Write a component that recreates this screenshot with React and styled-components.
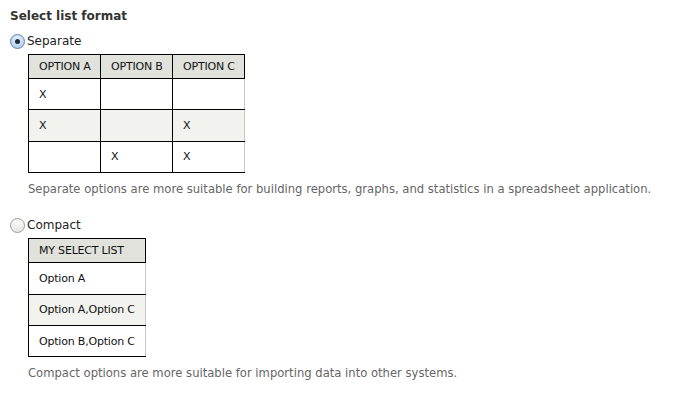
import React from 'react'
import styled, { createGlobalStyle } from 'styled-components'

const GlobalStyle = createGlobalStyle`
  body {
    margin: 0;
    background: #fff;
    font-family: "DejaVu Sans", "Liberation Sans", sans-serif;
    color: #333;
  }
`;

const separateRows = [
  ['X', '', ''],
  ['X', '', 'X'],
  ['', 'X', 'X'],
];

const compactRows = ['Option A', 'Option A,Option C', 'Option B,Option C'];

function Radio({ checked }) {
  return <RadioCircle $checked={checked}>{checked && <RadioDot />}</RadioCircle>
}

function App() {
  return (
    <Page>
      <GlobalStyle />
      <Title>Select list format</Title>

      <Choice>
        <Radio checked />
        <ChoiceLabel>Separate</ChoiceLabel>
      </Choice>
      <Indent>
        <Table>
          <thead>
            <tr>
              <Th $w={72}>OPTION A</Th>
              <Th $w={72}>OPTION B</Th>
              <Th $w={72}>OPTION C</Th>
            </tr>
          </thead>
          <tbody>
            {separateRows.map((row, i) => (
              <Tr key={i} $striped={i % 2 === 1}>
                {row.map((cell, j) => (
                  <Td key={j} $last={j === row.length - 1}>{cell}</Td>
                ))}
              </Tr>
            ))}
          </tbody>
        </Table>
        <Description>
          Separate options are more suitable for building reports, graphs, and statistics in a spreadsheet application.
        </Description>
      </Indent>

      <Choice>
        <Radio />
        <ChoiceLabel>Compact</ChoiceLabel>
      </Choice>
      <Indent>
        <Table>
          <thead>
            <tr>
              <Th $w={117}>MY SELECT LIST</Th>
            </tr>
          </thead>
          <tbody>
            {compactRows.map((cell, i) => (
              <Tr key={i} $striped={i % 2 === 1}>
                <Td $last>{cell}</Td>
              </Tr>
            ))}
          </tbody>
        </Table>
        <Description>Compact options are more suitable for importing data into other systems.</Description>
      </Indent>
    </Page>
  )
}

const Page = styled.div`
  padding: 7px 10px;
`;

const Title = styled.h3`
  margin: 0 0 7px;
  font-size: 12px;
  font-weight: bold;
  line-height: 18px;
  color: #333;
`;

const Choice = styled.div`
  display: flex;
  align-items: center;
  gap: 2px;
  height: 18px;
`;

const RadioCircle = styled.span`
  box-sizing: border-box;
  width: 15px;
  height: 15px;
  border-radius: 50%;
  border: 1px solid ${p => (p.$checked ? '#5d86b4' : '#9a9a9a')};
  background: ${p =>
    p.$checked
      ? 'radial-gradient(circle at 50% 35%, #eaf3fc 0%, #b7d2ee 70%, #8fb6e0 100%)'
      : 'linear-gradient(#fbfbfb, #e6e6e6)'};
  display: flex;
  align-items: center;
  justify-content: center;
`;

const RadioDot = styled.span`
  width: 5px;
  height: 5px;
  border-radius: 50%;
  background: #1d2a3a;
`;

const ChoiceLabel = styled.span`
  font-size: 12px;
  color: #222;
`;

const Indent = styled.div`
  padding: 4px 0 0 18px;
`;

const Table = styled.table`
  border-collapse: collapse;
  table-layout: fixed;
  font-size: 11px;
  letter-spacing: -0.2px;
  color: #111;
`;

const Th = styled.th`
  box-sizing: border-box;
  width: ${p => p.$w}px;
  height: 24px;
  padding: 0 0 0 10px;
  text-align: left;
  font-weight: normal;
  white-space: nowrap;
  overflow: hidden;
  background: #e2e2dd;
  border: 1px solid #000;
`;

const Tr = styled.tr`
  background: ${p => (p.$striped ? '#f2f2ee' : '#fff')};
`;

const Td = styled.td`
  box-sizing: border-box;
  height: 31.4px;
  padding: 0 0 0 10px;
  white-space: nowrap;
  border: 1px solid #000;
  border-right-color: ${p => (p.$last ? '#c8c8c8' : '#000')};
`;

const Description = styled.p`
  margin: 7px 0 18px;
  font-size: 11.6px;
  line-height: 18px;
  color: #666;
`;

export default App;
